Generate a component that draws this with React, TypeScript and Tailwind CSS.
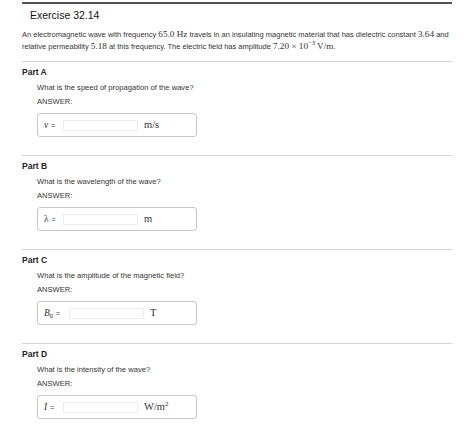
import React from 'react';

const serif = "font-['Liberation_Serif','Times_New_Roman',serif]";

function M({ children }: { children: React.ReactNode }) {
  return <span className={`${serif} text-[9.2px] leading-none`}>{children}</span>;
}

type Part = {
  id: string;
  question: string;
  symbol: React.ReactNode;
  unit: React.ReactNode;
  symW: string;
};

const parts: Part[] = [
  { id: 'A', question: 'What is the speed of propagation of the wave?', symbol: <i>v</i>, unit: 'm/s', symW: 'w-[19px]' },
  { id: 'B', question: 'What is the wavelength of the wave?', symbol: 'λ', unit: 'm', symW: 'w-[19px]' },
  {
    id: 'C',
    question: 'What is the amplitude of the magnetic field?',
    symbol: (
      <>
        <i>B</i>
        <span className="relative top-[2px] text-[6.5px]">0</span>
      </>
    ),
    unit: 'T',
    symW: 'w-[25px]',
  },
  {
    id: 'D',
    question: 'What is the intensity of the wave?',
    symbol: <i>I</i>,
    unit: (
      <>
        W/m<span className="relative -top-[4px] text-[7px]">2</span>
      </>
    ),
    symW: 'w-[19px]',
  },
];

function PartBlock({ part }: { part: Part }) {
  return (
    <div className="border-t border-[#d4d4d4] h-[94px]">
      <div className="font-bold text-[8.5px] text-[#222] mt-[5px] leading-[10px]">Part {part.id}</div>
      <div className="pl-[15px]">
        <div className="text-[7.6px] text-[#333] mt-[6px] leading-[10px]">{part.question}</div>
        <div className="text-[7.6px] text-[#333] mt-[4px] leading-[10px]">ANSWER:</div>
        <div className="mt-[6px] w-[160px] h-[24px] border border-[#c8c8c8] rounded-[3px] flex items-center pl-[6px]">
          <span className={`${serif} text-[9.5px] text-[#333] ${part.symW} flex items-baseline`}>
            {part.symbol}
            <span className="font-['Liberation_Sans',Arial,sans-serif] text-[7px] ml-[3px]">=</span>
          </span>
          <div className="w-[75px] h-[11px] border border-[#ececec] bg-white" />
          <span className={`${serif} text-[10.5px] leading-none text-[#333] ml-[6px]`}>{part.unit}</span>
        </div>
      </div>
    </div>
  );
}

export default function App() {
  return (
    <div className="w-[474px] h-[433px] bg-white overflow-hidden font-['Liberation_Sans',Arial,sans-serif] text-[#333]">
      <div className="mx-[22px] pt-[2px]">
        <div className="h-[2px] bg-[#555]" />
        <h1 className="text-[10.5px] text-[#111] pl-[8px] mt-[5px] leading-[12px]">Exercise 32.14</h1>
        <div className="text-[7.5px] leading-[12px] mt-[8px] text-[#333] whitespace-nowrap">
          <div>
            An electromagnetic wave with frequency <M>65.0 Hz</M> travels in an insulating magnetic material that has
            dielectric constant <M>3.64</M> and
          </div>
          <div>
            relative permeability <M>5.18</M> at this frequency. The electric field has amplitude{' '}
            <M>
              7.20 × 10<span className="relative -top-[4px] text-[6.5px]">−3</span> V/m
            </M>
            .
          </div>
        </div>
        <div className="mt-[8px]">
          {parts.map((p) => (
            <PartBlock key={p.id} part={p} />
          ))}
        </div>
      </div>
    </div>
  );
}
